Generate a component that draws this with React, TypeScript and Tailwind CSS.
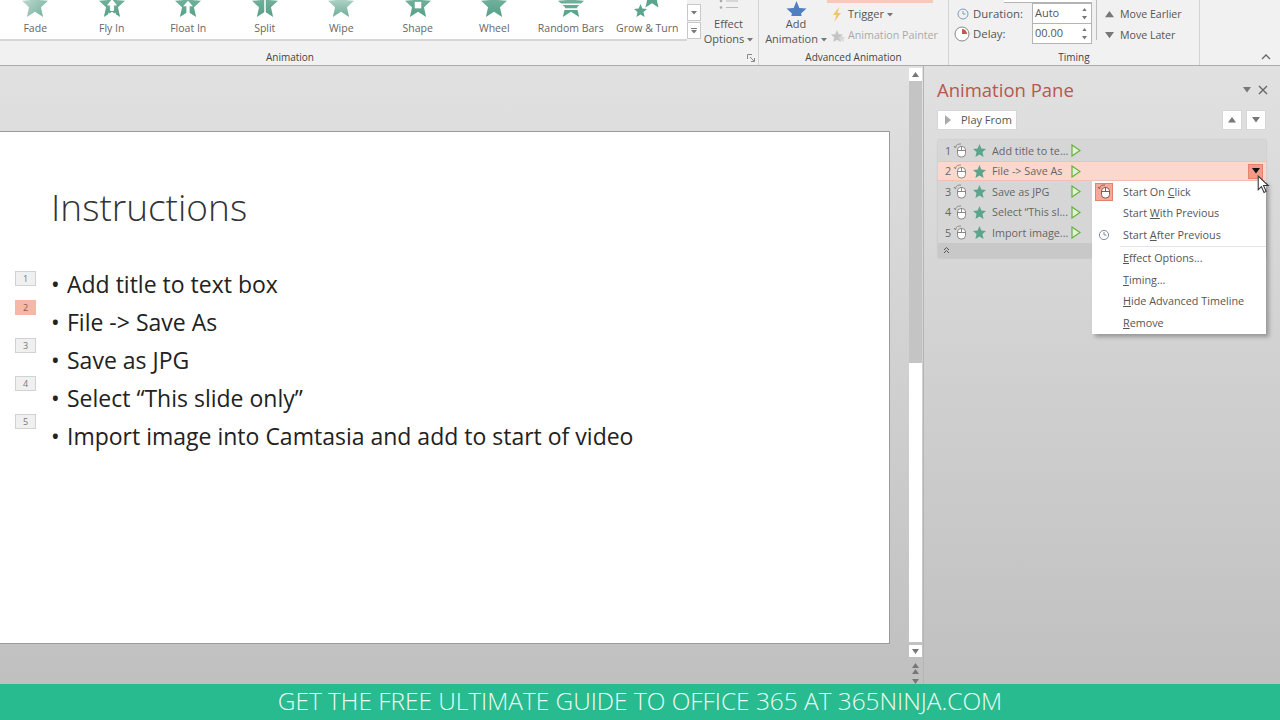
const sans = "font-['Open_Sans','Liberation_Sans',sans-serif]"

type StarKind = 'fade' | 'flyin' | 'floatin' | 'split' | 'wipe' | 'shape' | 'wheel' | 'bars' | 'grow'

const effects: { label: string; kind: StarKind }[] = [
  { label: 'Fade', kind: 'fade' },
  { label: 'Fly In', kind: 'flyin' },
  { label: 'Float In', kind: 'floatin' },
  { label: 'Split', kind: 'split' },
  { label: 'Wipe', kind: 'wipe' },
  { label: 'Shape', kind: 'shape' },
  { label: 'Wheel', kind: 'wheel' },
  { label: 'Random Bars', kind: 'bars' },
  { label: 'Grow & Turn', kind: 'grow' },
]

const STAR = 'M12 0 L15.4 8.4 L24 9.1 L17.5 14.9 L19.5 24 L12 19.2 L4.5 24 L6.5 14.9 L0 9.1 L8.6 8.4 Z'

function EffectStar({ kind }: { kind: StarKind }) {
  const light = kind === 'fade' || kind === 'wipe'
  return (
    <svg width="26" height="26" viewBox="0 0 24 24" className="shrink-0">
      <defs>
        <linearGradient id={'g-' + kind} x1="0" y1="0" x2={kind === 'fade' ? '1' : '0'} y2="1">
          <stop offset="0" stopColor={light ? '#cfe3db' : '#7fb8a5'} />
          <stop offset="1" stopColor={light ? '#6fae99' : '#55a088'} />
        </linearGradient>
      </defs>
      {kind === 'grow' ? (
        <>
          <path d={STAR} fill="#5ba58d" transform="translate(7 -4) scale(0.8)" />
          <path d={STAR} fill="#5ba58d" transform="translate(0 12) scale(0.5)" />
        </>
      ) : (
        <path d={STAR} fill={`url(#g-${kind})`} />
      )}
      {kind === 'flyin' && (
        <path d="M12 8 L16 13 H13.5 V18 H10.5 V13 H8 Z M9 20 V23 M12 20 V24 M15 20 V23" fill="#fff" stroke="#fff" strokeWidth="0.8" />
      )}
      {kind === 'floatin' && <path d="M12 9 L16.5 14 H13.5 V21 H10.5 V14 H7.5 Z" fill="#fff" />}
      {kind === 'split' && <path d="M11.3 0 H12.7 V24 H11.3 Z" fill="#fff" />}
      {kind === 'shape' && <path d="M9 10 H15 V16 H9 Z" fill="#fff" />}
      {kind === 'bars' && <path d="M0 11.5 H24 V13 H0 Z M0 16 H24 V17.5 H0 Z" fill="#fff" />}
    </svg>
  )
}

function GalleryItem({ label, kind }: { label: string; kind: StarKind }) {
  return (
    <div className="w-[76.5px] shrink-0 flex flex-col items-center">
      <div className="h-[17px] overflow-hidden flex items-end">
        <EffectStar kind={kind} />
      </div>
      <div className="mt-[4px] text-[10.5px] leading-[14px] text-[#666] whitespace-nowrap">{label}</div>
    </div>
  )
}

function Caret({ className = '' }: { className?: string }) {
  return (
    <svg width="6" height="4" viewBox="0 0 6 4" className={'inline-block ' + className}>
      <path d="M0 0 H6 L3 3.5 Z" fill="#777" />
    </svg>
  )
}

function Triangle({ up, color = '#777', size = 9 }: { up?: boolean; color?: string; size?: number }) {
  return (
    <svg width={size} height={size * 0.7} viewBox="0 0 10 7">
      <path d={up ? 'M0 7 L5 0 L10 7 Z' : 'M0 0 H10 L5 7 Z'} fill={color} />
    </svg>
  )
}

function Spinner({ value }: { value: string }) {
  return (
    <div className="w-[60px] h-[21px] bg-white border border-[#b4b4b4] flex items-center pl-[2px] pr-[4px]">
      <span className="flex-1 text-[11px] text-[#555]">{value}</span>
      <div className="flex flex-col gap-[5px]">
        <Triangle up size={5} />
        <Triangle size={5} />
      </div>
    </div>
  )
}

function Ribbon() {
  return (
    <div className="h-[66px] bg-[#f1f1f1] border-b border-[#ababab] flex shrink-0 overflow-hidden">
      {/* Animation group */}
      <div className="w-[759px] shrink-0 border-r border-[#d4d4d4] flex flex-col">
        <div className="flex h-[49px]">
          <div className="w-[687px] h-[41px] bg-white border-b-2 border-[#d6d6d6] flex overflow-hidden">
            <div className="flex -ml-[3px]">
              {effects.map(e => (
                <GalleryItem key={e.label} {...e} />
              ))}
            </div>
          </div>
          <div className="w-[14px] h-[41px] flex flex-col gap-[1px] pt-[4px]">
            <div className="h-[17px] bg-white border border-[#c9c9c9] flex items-center justify-center">
              <Caret />
            </div>
            <div className="h-[17px] bg-white border border-[#c9c9c9] flex flex-col items-center justify-center gap-[1px]">
              <div className="w-[6px] h-px bg-[#777]" />
              <Caret />
            </div>
          </div>
          <div className="flex-1 flex flex-col items-center pr-[2px] text-[11px] leading-[15px] text-[#555]">
            <div className="h-[16px] w-[22px] overflow-hidden shrink-0">
              <svg width="22" height="10" viewBox="0 0 22 10">
                <circle cx="3" cy="1" r="1.3" fill="#aaa" />
                <path d="M8 1 H20 M8 7.5 H20" stroke="#bbb" />
                <circle cx="3" cy="7.5" r="1.3" fill="#aaa" />
              </svg>
            </div>
            <div>Effect</div>
            <div className="whitespace-nowrap">
              Options <Caret className="mb-[1px]" />
            </div>
          </div>
        </div>
        <div className="flex flex-1 items-center">
          <div className="w-[580px] text-center text-[10px] leading-[14px] text-[#444]">Animation</div>
          <svg width="8" height="8" viewBox="0 0 8 8" className="ml-[167px] mt-[2px]">
            <path d="M0.5 5 V0.5 H5 M3 3 L7 7 M4 7.5 H7.5 V4" fill="none" stroke="#888" />
          </svg>
        </div>
      </div>

      {/* Advanced Animation group */}
      <div className="w-[190px] shrink-0 border-r border-[#d4d4d4] flex flex-col">
        <div className="flex h-[49px]">
          <div className="w-[68px] pl-[6px] flex flex-col items-center text-[11px] leading-[15px] text-[#555]">
            <div className="h-[16px] overflow-hidden flex items-end shrink-0">
              <svg width="21" height="20" viewBox="0 0 24 24" className="shrink-0 -mb-[5px]">
                <path d={STAR} fill="#4f7fc1" />
              </svg>
            </div>
            <div>Add</div>
            <div className="whitespace-nowrap">
              Animation <Caret className="mb-[1px]" />
            </div>
          </div>
          <div className="flex-1 flex flex-col">
            <div className="w-[106px] h-[3px] bg-[#f8c8b8]" />
            <div className="h-[21px] mt-px flex items-center pl-[5px] text-[11px] text-[#555]">
              <svg width="10" height="15" viewBox="0 0 10 15" className="mr-[6px]">
                <path d="M7 0 L1 8 H4.5 L2 15 L9 6 H5.5 Z" fill="#f2c46b" />
              </svg>
              Trigger <Caret className="ml-[3px]" />
            </div>
            <div className="h-[21px] flex items-center pl-[4px] text-[10.7px] text-[#aaa] whitespace-nowrap">
              <svg width="15" height="12" viewBox="0 0 24 19" className="mr-[2px]">
                <path d={STAR} fill="#c4c4c4" transform="scale(0.8)" />
                <path d={STAR} fill="#d8d8d8" transform="translate(11 7) scale(0.5)" />
              </svg>
              Animation Painter
            </div>
          </div>
        </div>
        <div className="flex-1 text-center text-[10px] leading-[16px] text-[#444]">Advanced Animation</div>
      </div>

      {/* Timing group */}
      <div className="w-[251px] shrink-0 border-r border-[#d4d4d4] flex flex-col">
        <div className="flex h-[49px]">
          <div className="w-[148px] h-[40px] border-r border-[#bdbdbd] flex flex-col items-end pr-[4px]">
            <div className="w-[88px] h-[3px] bg-white border-b border-[#b4b4b4] shrink-0" />
            <div className="w-full h-[21px] shrink-0 flex items-center text-[11.4px] text-[#555]">
              <svg width="12" height="12" viewBox="0 0 12 12" className="ml-[8px] mr-[4px]">
                <circle cx="6" cy="6" r="5" fill="none" stroke="#7a9cc0" />
                <path d="M6 3 V6 H8.5" fill="none" stroke="#7a9cc0" />
              </svg>
              <span className="flex-1">Duration:</span>
              <Spinner value="Auto" />
            </div>
            <div className="w-full h-[21px] shrink-0 -mt-px flex items-center text-[11.4px] text-[#555]">
              <svg width="16" height="16" viewBox="0 0 16 16" className="ml-[5px] mr-[3px] shrink-0">
                <circle cx="8" cy="8" r="7" fill="#fff" stroke="#888" />
                <path d="M8 3 A5 5 0 0 1 13 8 H8 Z" fill="#c9554d" />
              </svg>
              <span className="flex-1">Delay:</span>
              <Spinner value="00.00" />
            </div>
          </div>
          <div className="flex flex-col pl-[8px] pt-[4px] text-[10.6px] text-[#555] whitespace-nowrap">
            <div className="h-[21px] flex items-center gap-[6px]">
              <Triangle up size={9} /> Move Earlier
            </div>
            <div className="h-[21px] flex items-center gap-[6px]">
              <Triangle size={9} /> Move Later
            </div>
          </div>
        </div>
        <div className="flex-1 text-center text-[10px] leading-[16px] text-[#444]">Timing</div>
      </div>

      <div className="flex-1 flex items-end justify-end pr-[9px] pb-[5px]">
        <svg width="10" height="6" viewBox="0 0 10 6">
          <path d="M1 5 L5 1 L9 5" fill="none" stroke="#666" strokeWidth="1.3" />
        </svg>
      </div>
    </div>
  )
}

const bullets = [
  'Add title to text box',
  'File -> Save As',
  'Save as JPG',
  'Select “This slide only”',
  'Import image into Camtasia and add to start of video',
]

// the badges don't sit on the text rows: the first gap is shorter than the rest
const badgeGaps = ['mt-0', 'mt-[14px]', 'mt-[23px]', 'mt-[23px]', 'mt-[23px]']

function Slide() {
  return (
    <div className="w-[890px] h-[513px] bg-white border-t border-r border-b border-[#9a9a9a] shrink-0">
      <div className="pl-[51px] pt-[50px] text-[37px] leading-[50px] font-light text-[#333]">Instructions</div>
      <div className="mt-[39px] flex">
        <div className="ml-[15px] w-[21px] flex flex-col">
          {badgeGaps.map((gap, i) => (
            <div
              key={i}
              className={
                gap +
                ' h-[15px] border flex items-center justify-center text-[9px] ' +
                (i === 1 ? 'bg-[#f6b8a6] border-[#f6b8a6] text-[#8a5a4a]' : 'bg-[#f0f0f0] border-[#d2d2d2] text-[#777]')
              }
            >
              {i + 1}
            </div>
          ))}
        </div>
        <div className="ml-[15px]">
          {bullets.map(b => (
            <div key={b} className="h-[38px] flex text-[23px] leading-[26px] text-[#222] whitespace-nowrap">
              <span className="w-[16px]">•</span>
              <span>{b}</span>
            </div>
          ))}
        </div>
      </div>
    </div>
  )
}

function ScrollColumn() {
  return (
    <div className="w-[14px] shrink-0 flex flex-col pt-[2px] pr-px">
      <div className="h-[13px] bg-white flex items-center justify-center">
        <Triangle up size={7} />
      </div>
      <div className="h-[283px] bg-[#c4c4c4]" />
      <div className="h-[280px] bg-white" />
      <div className="h-[12px] mt-[3px] bg-white flex items-center justify-center">
        <Triangle size={7} />
      </div>
      <div className="mt-[6px] flex flex-col items-center gap-[1px]">
        <Triangle up size={7} />
        <Triangle up size={7} />
      </div>
      <div className="mt-[5px] flex justify-center">
        <Triangle size={7} />
      </div>
    </div>
  )
}

function MouseIcon({ color = '#888' }: { color?: string }) {
  return (
    <svg width="14" height="15" viewBox="0 0 14 15" className="shrink-0">
      <rect x="4.5" y="3.5" width="8" height="10.5" rx="3.5" fill="#fff" stroke={color} />
      <path d="M4.5 7.5 H12.5 M8.5 3.5 V7.5" stroke={color} />
      <path d="M1 3 L2.5 5 C3 2 4 1 8 1" fill="none" stroke={color} />
    </svg>
  )
}

const paneRows = ['Add title to te...', 'File -> Save As', 'Save as JPG', 'Select “This sl...', 'Import image...']

function PaneRow({ n, text, active }: { n: number; text: string; active?: boolean }) {
  return (
    <div
      className={
        'h-[20.5px] pt-px flex items-center text-[10.8px] text-[#666] whitespace-nowrap ' +
        (active ? 'bg-[#fbd8ce] border-y border-[#f3c0b1]' : '')
      }
    >
      <span className="ml-[7px] w-[8px]">{n}</span>
      <MouseIcon />
      <svg width="13" height="13" viewBox="0 0 24 24" className="ml-[6px] shrink-0">
        <path d={STAR} fill="#5ba58d" />
      </svg>
      <span className="ml-[6px] w-[79px] overflow-hidden">{text}</span>
      <svg width="10" height="13" viewBox="0 0 10 13" className="shrink-0">
        <path d="M1 1 L9 6.5 L1 12 Z" fill="#e3f1d8" stroke="#63b33c" strokeWidth="1.2" />
      </svg>
      {active && (
        <div className="ml-auto mr-[3px] w-[15px] h-[15px] bg-[#f29a87] border border-[#e8836e] flex items-center justify-center">
          <Triangle color="#111" size={8} />
        </div>
      )}
    </div>
  )
}

const menuTop = [
  { pre: 'Start On ', u: 'C', post: 'lick' },
  { pre: 'Start ', u: 'W', post: 'ith Previous' },
  { pre: 'Start ', u: 'A', post: 'fter Previous' },
]
const menuBottom = [
  { pre: '', u: 'E', post: 'ffect Options...' },
  { pre: '', u: 'T', post: 'iming...' },
  { pre: '', u: 'H', post: 'ide Advanced Timeline' },
  { pre: '', u: 'R', post: 'emove' },
]

function MenuItem({ pre, u, post, icon }: { pre: string; u: string; post: string; icon?: React.ReactNode }) {
  return (
    <div className="h-[21.5px] flex items-center text-[10.8px] text-[#555] whitespace-nowrap">
      <div className="w-[23px] mr-[8px] shrink-0 flex justify-center">{icon}</div>
      <span>
        {pre}
        <u>{u}</u>
        {post}
      </span>
    </div>
  )
}

function ContextMenu() {
  return (
    <div className="absolute left-[154px] top-[41px] w-[174px] h-[153px] bg-white shadow-[3px_3px_4px_rgba(0,0,0,0.28)]">
      <MenuItem
        {...menuTop[0]}
        icon={
          <div className="w-[18px] h-[18px] bg-[#f5a998] border border-[#e4806c] flex items-center justify-center shrink-0">
            <MouseIcon color="#8a5a50" />
          </div>
        }
      />
      <MenuItem {...menuTop[1]} />
      <MenuItem
        {...menuTop[2]}
        icon={
          <svg width="12" height="12" viewBox="0 0 12 12">
            <circle cx="6" cy="6" r="4.6" fill="none" stroke="#7f8fa3" />
            <path d="M6 3 V6 H8.5" fill="none" stroke="#7f8fa3" />
          </svg>
        }
      />
      <div className="ml-[28px] mb-px h-px bg-[#e4e4e4]" />
      {menuBottom.map(m => (
        <MenuItem key={m.u} {...m} />
      ))}
    </div>
  )
}

function AnimationPane() {
  return (
    <div className="flex-1 border-l border-[#b5b5b5] pl-[13px] pr-[14px] pt-[12px]">
      <div className="h-[24px] flex items-center">
        <span className="flex-1 text-[18.5px] text-[#b5584e]">Animation Pane</span>
        <Triangle size={8} />
        <svg width="10" height="10" viewBox="0 0 10 10" className="ml-[7px] -mr-[2px]">
          <path d="M1 1 L9 9 M9 1 L1 9" stroke="#666" strokeWidth="1.4" />
        </svg>
      </div>
      <div className="mt-[8px] flex items-center gap-[4px]">
        <div className="w-[80px] h-[20px] bg-white border border-[#d6d6d6] flex items-center text-[11px] text-[#555]">
          <svg width="6" height="10" viewBox="0 0 6 10" className="ml-[7px] mr-[10px]">
            <path d="M0 0 L6 5 L0 10 Z" fill="#aaa" />
          </svg>
          Play From
        </div>
        <div className="ml-auto w-[20px] h-[20px] bg-white border border-[#d6d6d6] flex items-center justify-center">
          <Triangle up size={8} />
        </div>
        <div className="w-[20px] h-[20px] bg-white border border-[#d6d6d6] flex items-center justify-center">
          <Triangle size={8} />
        </div>
      </div>
      <div className="relative mt-[10px] ml-px bg-[#d6d6d6] shadow-[0_0_2px_rgba(0,0,0,0.15)]">
        {paneRows.map((t, i) => (
          <PaneRow key={t} n={i + 1} text={t} active={i === 1} />
        ))}
        <div className="h-[15px] bg-[#c8c8c8] flex items-center pl-[5px]">
          <svg width="7" height="8" viewBox="0 0 7 8">
            <path d="M1 4 L3.5 1.5 L6 4 M1 7 L3.5 4.5 L6 7" fill="none" stroke="#555" />
          </svg>
        </div>
        <ContextMenu />
        <svg width="13" height="19" viewBox="0 0 12 18" className="absolute left-[319px] top-[35px]">
          <path d="M1 1 V14 L4 11 L6.5 16.5 L8.5 15.5 L6 10 H10.5 Z" fill="#fff" stroke="#333" />
        </svg>
      </div>
    </div>
  )
}

export default function App() {
  return (
    <div className={'w-[1280px] h-[720px] flex flex-col overflow-hidden ' + sans}>
      <Ribbon />
      <div className="h-[618px] flex bg-linear-to-b from-[#e1e1e1] to-[#c0c0c0] overflow-hidden">
        <div className="w-[909px] shrink-0 pt-[65px]">
          <Slide />
        </div>
        <ScrollColumn />
        <AnimationPane />
      </div>
      <div className="h-[36px] pb-[2px] bg-[#27bb8f] flex items-center justify-center text-[24.4px] font-light text-[#eefbf7] shrink-0">
        GET THE FREE ULTIMATE GUIDE TO OFFICE 365 AT 365NINJA.COM
      </div>
    </div>
  )
}
